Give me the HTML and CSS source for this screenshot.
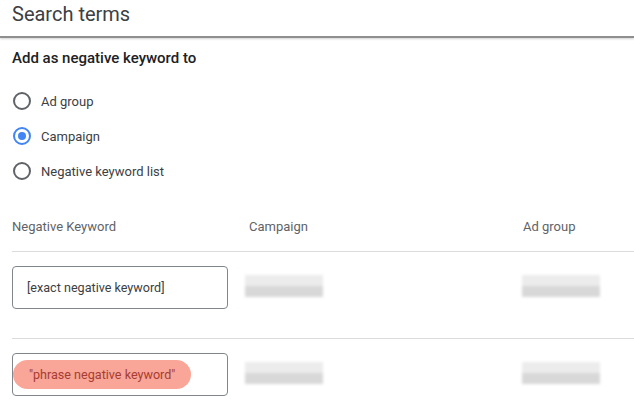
FILE: index.html
```html
<!DOCTYPE html>
<html lang="en">
<head>
    <meta charset="UTF-8">
    <meta name="viewport" content="width=device-width, initial-scale=1.0">
    <title>Search terms</title>
    <link rel="stylesheet" href="styles.css">
</head>
<body>
    <div class="topbar">
        <h1 class="title">Search terms</h1>
    </div>

    <div class="panel">
        <h2 class="section-title">Add as negative keyword to</h2>

        <div class="radios">
            <label class="radio">
                <span class="radio-dot"></span>
                Ad group
            </label>
            <label class="radio checked">
                <span class="radio-dot"></span>
                Campaign
            </label>
            <label class="radio">
                <span class="radio-dot"></span>
                Negative keyword list
            </label>
        </div>

        <div class="table">
            <div class="row head">
                <div class="cell">Negative Keyword</div>
                <div class="cell">Campaign</div>
                <div class="cell">Ad group</div>
            </div>
            <div class="row">
                <div class="cell">
                    <div class="field">[exact negative keyword]</div>
                </div>
                <div class="cell"><span class="hidden-value"></span></div>
                <div class="cell ad"><span class="hidden-value"></span></div>
            </div>
            <div class="row">
                <div class="cell">
                    <div class="field">
                        <span class="mark">"phrase negative keyword"</span>
                    </div>
                </div>
                <div class="cell"><span class="hidden-value"></span></div>
                <div class="cell ad"><span class="hidden-value"></span></div>
            </div>
        </div>
    </div>
</body>
</html>
```

FILE: styles.css
```css
body {
    margin: 0;
    font-family: Roboto, Arial, sans-serif;
    color: #3c4043;
    background-color: #fff;
    overflow: hidden;
}

.topbar {
    height: 36px;
    padding-left: 12px;
    border-bottom: 2px solid #8f8f8f;
    box-shadow: 0 1px 2px rgba(0, 0, 0, 0.18);
}

.title {
    margin: 0;
    padding-top: 2px;
    font-size: 20px;
    font-weight: 400;
    line-height: 24px;
    color: #3c4043;
}

.panel {
    padding-left: 12px;
}

.section-title {
    margin: 10px 0 0;
    font-size: 15px;
    font-weight: 500;
    line-height: 20px;
    color: #202124;
}

.radios {
    display: flex;
    flex-direction: column;
    gap: 15px;
    margin-top: 23px;
}

.radio {
    display: flex;
    align-items: center;
    gap: 10px;
    height: 20px;
    font-size: 13px;
    color: #3c4043;
}

.radio-dot {
    width: 14px;
    height: 14px;
    border: 2px solid #5f6368;
    border-radius: 50%;
    position: relative;
    margin-left: 1px;
}

.radio.checked .radio-dot {
    border-color: #4285f4;
}

.radio.checked .radio-dot::after {
    content: "";
    position: absolute;
    top: 3px;
    left: 3px;
    width: 8px;
    height: 8px;
    border-radius: 50%;
    background-color: #4285f4;
}

.table {
    margin-top: 38px;
}

.row {
    display: grid;
    grid-template-columns: 237px 274px 1fr;
    align-items: start;
    height: 86px;
    border-bottom: 1px solid #dadce0;
}

.row.head {
    height: 32px;
    font-size: 13px;
    color: #5f6368;
}

.row:last-child {
    border-bottom: none;
}

.cell {
    padding-top: 14px;
}

.row.head .cell {
    padding-top: 0;
    line-height: 16px;
}

.field {
    box-sizing: border-box;
    width: 216px;
    height: 43px;
    border: 1px solid #80868b;
    border-radius: 4px;
    padding-left: 14px;
    display: flex;
    align-items: center;
    font-size: 12.6px;
    color: #3c4043;
}

.field .mark {
    margin-left: -14px;
    padding: 0 16px;
    height: 29px;
    display: flex;
    align-items: center;
    border-radius: 15px;
    background-color: #f9a597;
    color: #a63d33;
}

.hidden-value {
    display: block;
    width: 78px;
    height: 22px;
    margin: 9px 0 0 -4px;
    background: linear-gradient(#ececec 0 48%, #d8d8d8 48% 100%);
    filter: blur(1.5px);
}

.cell.ad .hidden-value {
    margin-left: -1px;
}
```
